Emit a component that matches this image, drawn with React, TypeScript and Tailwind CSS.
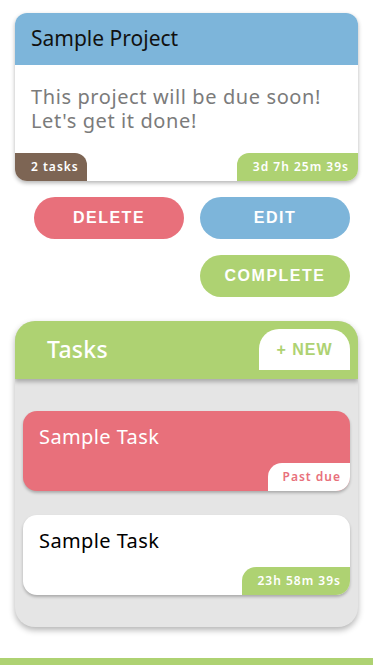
import React from "react";

const font = { fontFamily: '"Noto Sans", "Open Sans", sans-serif' };
const arial = { fontFamily: '"Liberation Sans", Arial, sans-serif' };

const TaskCard = ({ title, badge, late }: { title: string; badge: string; late?: boolean }) => (
  <div
    className={`flex h-[80px] flex-col justify-between overflow-hidden rounded-[14px] shadow-[0_2px_3px_rgba(0,0,0,0.25)] ${
      late ? "bg-[#e8707b] text-white" : "bg-white text-black"
    }`}
  >
    <div className="px-4 pt-[13px] text-[20px] leading-[26px] tracking-[0.4px]">{title}</div>
    <div className="flex justify-end">
      <span
        className={`flex h-[28px] items-center rounded-tl-[14px] pl-[15px] pr-[9px] text-[12px] font-semibold tracking-[1px] ${
          late ? "bg-white text-[#e8707b]" : "bg-[#aed272] text-white"
        }`}
      >
        {badge}
      </span>
    </div>
  </div>
);

const PillButton = ({ label, color }: { label: string; color: string }) => (
  <button
    className={`h-[42px] w-[150px] rounded-full text-[16px] font-bold tracking-[1.5px] text-white ${color}`}
    style={arial}
  >
    {label}
  </button>
);

export default function App() {
  return (
    <div className="relative h-[665px] w-[373px] overflow-hidden bg-white" style={font}>
      <div className="px-[15px] pt-[13px]">
        {/* project card */}
        <div className="overflow-hidden rounded-[12px] bg-white shadow-[0_2px_4px_rgba(0,0,0,0.3)]">
          <div className="flex h-[52px] items-center bg-[#7db5da] px-4 text-[21px] text-[#111]">
            Sample Project
          </div>
          <div className="px-4 pt-[20px] text-[20px] leading-[24px] tracking-[0.6px] text-[#7b7b7b]">
            <p>This project will be due soon!</p>
            <p>Let's get it done!</p>
          </div>
          <div className="mt-[20px] flex justify-between">
            <span className="flex h-[28px] w-[72px] items-center rounded-tr-[12px] bg-[#7d6554] pl-[16px] text-[12px] font-semibold tracking-[1px] text-white">
              2 tasks
            </span>
            <span className="flex h-[28px] items-center rounded-tl-[12px] bg-[#aed272] pl-[16px] pr-[9px] text-[12px] font-semibold tracking-[1px] text-white">
              3d 7h 25m 39s
            </span>
          </div>
        </div>

        {/* actions */}
        <div className="mt-[16px] grid grid-cols-2 gap-x-[16px] gap-y-[16px] px-[19px] pr-[8px]">
          <PillButton label="DELETE" color="bg-[#e8707b]" />
          <PillButton label="EDIT" color="bg-[#7db5da]" />
          <div />
          <PillButton label="COMPLETE" color="bg-[#aed272]" />
        </div>

        {/* tasks panel */}
        <div className="mt-[24px] overflow-hidden rounded-[20px] bg-[#e5e5e5] shadow-[0_3px_6px_rgba(0,0,0,0.3)]">
          <div className="flex h-[58px] items-start justify-between bg-[#aed272] pr-[8px] shadow-[0_3px_4px_rgba(0,0,0,0.25)]">
            <span className="pl-[32px] pt-[13px] text-[23px] font-medium leading-[30px] tracking-[0.3px] text-white">
              Tasks
            </span>
            <span
              className="mt-[8px] flex h-[41px] w-[91px] items-center justify-center rounded-t-[20px] bg-white text-[16px] font-bold tracking-[1px] text-[#aed272]"
              style={arial}
            >
              + NEW
            </span>
          </div>
          <div className="flex flex-col gap-[24px] px-[8px] pb-[32px] pt-[32px]">
            <TaskCard title="Sample Task" badge="Past due" late />
            <TaskCard title="Sample Task" badge="23h 58m 39s" />
          </div>
        </div>
      </div>
      <div className="absolute bottom-0 left-0 h-[7px] w-full bg-[#aed272]" />
    </div>
  );
}
